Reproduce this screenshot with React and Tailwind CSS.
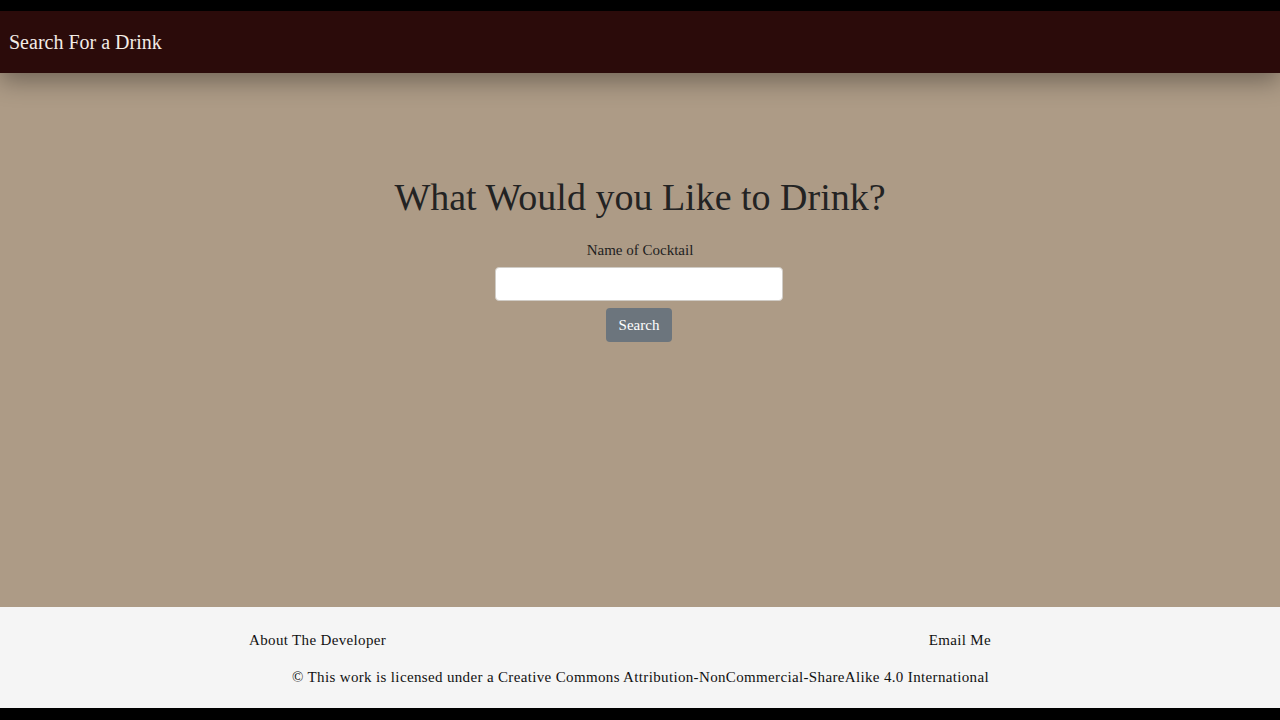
export default function App() {
  return (
    <div className="flex h-[720px] w-[1280px] flex-col overflow-hidden bg-black font-['Liberation_Serif',serif]">
      <div className="h-[11px] shrink-0 bg-black" />
      <header className="relative z-10 flex h-[62px] shrink-0 items-center bg-[#2b0b0a] px-[9px] shadow-[0_8px_24px_rgba(0,0,0,0.35)]">
        <span className="text-[20px] text-[#f3ece6]">Search For a Drink</span>
      </header>
      <main className="flex flex-1 flex-col items-center bg-[#ad9b86] pt-[104px]">
        <h1 className="text-[38px] leading-[40px] text-[#232323]">What Would you Like to Drink?</h1>
        <label className="mt-[24px] text-[15px] leading-[18px] text-[#1e1e1e]">Name of Cocktail</label>
        <input className="mt-[8px] h-[34px] w-[288px] -translate-x-px rounded-[4px] border border-[#d0ccc6] bg-white px-2 outline-none" />
        <button className="mt-[7px] h-[34px] -translate-x-px rounded-[4px] bg-[#6c757d] px-[13px] text-[15px] text-white">Search</button>
      </main>
      <footer className="flex h-[101px] shrink-0 flex-col bg-[#f5f5f5] text-[15px] tracking-[0.35px] text-[#111]">
        <div className="ml-[249px] flex w-[742px] justify-between pt-[22px]">
          <span>About The Developer</span>
          <span>Email Me</span>
        </div>
        <div className="ml-[249px] mt-[14px] w-[742px] whitespace-nowrap pr-[2px] text-right">
          © This work is licensed under a Creative Commons Attribution-NonCommercial-ShareAlike 4.0 International
        </div>
      </footer>
      <div className="h-[12px] shrink-0 bg-black" />
    </div>
  );
}
